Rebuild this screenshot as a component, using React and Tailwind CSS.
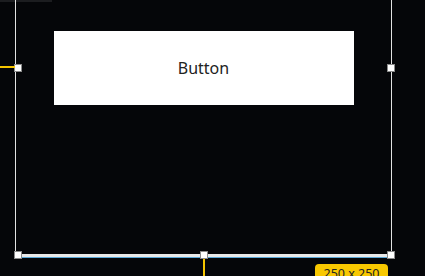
function Handle({ className }) {
  return <div className={`absolute w-[8px] h-[8px] bg-white border-[1.5px] border-[#8a8a8a] ${className}`} />;
}

export default function App() {
  return (
    <div className="relative w-[425px] h-[276px] overflow-hidden bg-[#050609] font-['Noto_Sans',sans-serif]">
      {/* tab strip at the top edge */}
      <div className="absolute left-0 top-0 w-[52px] h-[2px] bg-[#1c1d20]" />

      <div className="pl-[15px]">
        {/* selection frame around the artboard */}
        <div className="relative w-[377px] h-[257px] border-x-[1.5px] border-x-[#e2e2e2] border-b-[3px] border-b-[#e8e8e8] shadow-[0_1px_0_#5aa7d6]">
          <div className="pt-[31px] pl-[37.5px]">
            <div className="w-[300px] h-[74px] bg-white flex items-center justify-center text-[16px] text-[#222]">
              Button
            </div>
          </div>

          <Handle className="left-[-2px] top-[64px]" />
          <Handle className="right-[-4px] top-[64px]" />
          <Handle className="left-[-2px] bottom-[-5px]" />
          <Handle className="left-[184px] bottom-[-5px]" />
          <Handle className="right-[-4px] bottom-[-5px]" />
        </div>
      </div>

      {/* guides */}
      <div className="absolute left-0 top-[66px] w-[15px] h-[2px] bg-[#f5c400]" />
      <div className="absolute left-[203px] top-[259px] w-[2px] h-[18px] bg-[#f5c400]" />

      {/* size badge */}
      <div className="absolute left-[315px] top-[264px] w-[73px] h-[20px] rounded-[4px] bg-[#f8c800] flex justify-center pt-[2px] text-[12.5px] leading-[16px] text-[#222]">
        250 x 250
      </div>
    </div>
  );
}
